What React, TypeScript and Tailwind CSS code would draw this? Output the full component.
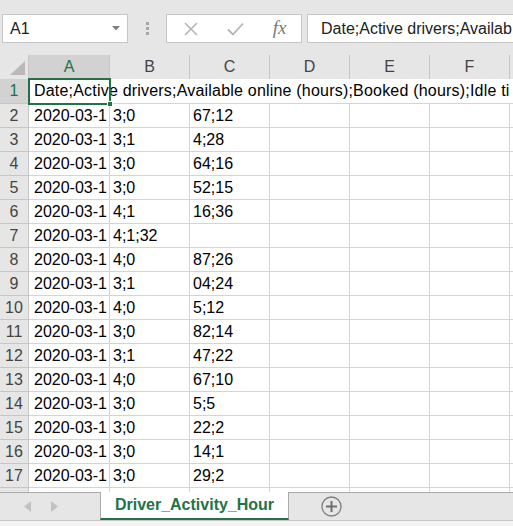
import React from 'react';

const font = { fontFamily: '"Liberation Sans", Arial, sans-serif' };

const data: [string, string][] = [
  ['3;0', '67;12'],
  ['3;1', '4;28'],
  ['3;0', '64;16'],
  ['3;0', '52;15'],
  ['4;1', '16;36'],
  ['4;1;32', ''],
  ['4;0', '87;26'],
  ['3;1', '04;24'],
  ['4;0', '5;12'],
  ['3;0', '82;14'],
  ['3;1', '47;22'],
  ['4;0', '67;10'],
  ['3;0', '5;5'],
  ['3;0', '22;2'],
  ['3;0', '14;1'],
  ['3;0', '29;2'],
];

const cols = ['A', 'B', 'C', 'D', 'E', 'F', 'G'];
const colWidths = ['w-[81px]', 'w-[80px]', 'w-[80px]', 'w-[80px]', 'w-[80px]', 'w-[80px]', 'w-[80px]'];

function TopBar() {
  return (
    <div className="flex h-[55px] shrink-0 items-start overflow-hidden bg-[#e6e6e6] pt-[14px]">
      <div className="ml-[2px] flex h-[29px] w-[126px] shrink-0 items-center justify-between border border-[#c6c6c6] bg-white pl-[7px] pr-[7px] text-[16px] text-[#222]">
        <span>A1</span>
        <svg width="8" height="5" viewBox="0 0 8 5">
          <path d="M0 0 L8 0 L4 4.5 Z" fill="#808080" />
        </svg>
      </div>
      <div className="flex h-[29px] w-[38px] shrink-0 flex-col items-center justify-center gap-[2px]">
        <span className="h-[3px] w-[3px] bg-[#a6a6a6]" />
        <span className="h-[3px] w-[3px] bg-[#a6a6a6]" />
        <span className="h-[3px] w-[3px] bg-[#a6a6a6]" />
      </div>
      <div className="flex h-[29px] w-[136px] shrink-0 items-center border border-[#c6c6c6] bg-white">
        <div className="flex w-[45px] justify-center pl-[3px]">
          <svg width="14" height="14" viewBox="0 0 14 14">
            <path d="M1 1 L13 13 M13 1 L1 13" stroke="#b4b4b4" strokeWidth="1.6" />
          </svg>
        </div>
        <div className="flex w-[46px] justify-center">
          <svg width="17" height="14" viewBox="0 0 17 14">
            <path d="M1 7.5 L6 12.5 L16 1.5" stroke="#b4b4b4" strokeWidth="1.8" fill="none" />
          </svg>
        </div>
        <div
          className="flex w-[43px] justify-center text-[19px] italic text-[#7a7a7a]"
          style={{ fontFamily: '"Liberation Serif", "Times New Roman", serif' }}
        >
          fx
        </div>
      </div>
      <div className="ml-[5px] flex h-[29px] w-[230px] shrink-0 items-center whitespace-nowrap border border-[#c6c6c6] bg-white pl-[13px] text-[16px] text-[#222]">
        Date;Active drivers;Availab
      </div>
    </div>
  );
}

function ColumnHeader() {
  return (
    <div className="flex h-[24px] shrink-0 bg-[#e6e6e6]">
      <div className="flex w-[29px] shrink-0 items-end justify-end border-r border-[#c6c6c6] pb-[4px] pr-[3px]">
        <svg width="15" height="14" viewBox="0 0 15 14">
          <path d="M15 0 L15 14 L0 14 Z" fill="#b9b9b9" />
        </svg>
      </div>
      {cols.map((c, i) => (
        <div
          key={c}
          className={`${colWidths[i]} flex shrink-0 items-center justify-center border-r border-[#c6c6c6] text-[16px] ${
            i === 0 ? 'bg-[#d2d2d2] text-[#217346]' : 'text-[#444]'
          }`}
        >
          {i < 6 ? c : ''}
        </div>
      ))}
    </div>
  );
}

function RowHeader({ n, selected }: { n: number; selected?: boolean }) {
  return (
    <div
      className={`flex w-[29px] shrink-0 items-center justify-center border-b border-r border-[#c6c6c6] text-[16px] ${
        selected ? 'bg-[#d2d2d2] text-[#217346]' : 'bg-[#e6e6e6] text-[#444]'
      }`}
    >
      {n}
    </div>
  );
}

function Cell({ i, children }: { i: number; children?: React.ReactNode }) {
  return (
    <div
      className={`${colWidths[i]} flex shrink-0 items-center overflow-hidden whitespace-nowrap border-b border-r border-[#d4d4d4] ${
        i === 0 ? 'pl-[5px]' : 'pl-[3px]'
      } text-[16px] text-black`}
    >
      {children}
    </div>
  );
}

function Sheet() {
  return (
    <div className="relative flex h-[437px] shrink-0 flex-col overflow-hidden bg-white">
      <ColumnHeader />
      <div className="flex h-[25px] shrink-0">
        <RowHeader n={1} selected />
        <div className="flex flex-1 items-center overflow-hidden whitespace-nowrap border-b border-[#d4d4d4] pl-[5px] text-[16px] tracking-[0.2px] text-black">
          Date;Active drivers;Available online (hours);Booked (hours);Idle ti
        </div>
      </div>
      {data.map(([b, c], r) => (
        <div key={r} className="flex h-[24px] shrink-0">
          <RowHeader n={r + 2} />
          <Cell i={0}>2020-03-1</Cell>
          <Cell i={1}>{b}</Cell>
          <Cell i={2}>{c}</Cell>
          <Cell i={3} />
          <Cell i={4} />
          <Cell i={5} />
          <Cell i={6} />
        </div>
      ))}
      <div className="flex h-[24px] shrink-0">
        <div className="w-[29px] shrink-0 border-r border-[#c6c6c6] bg-[#e6e6e6]" />
        {cols.map((c, i) => (
          <Cell key={c} i={i} />
        ))}
      </div>
      {/* A1 selection */}
      <div className="pointer-events-none absolute left-[28px] top-[23px] h-[27px] w-[83px] border-2 border-[#217346]">
        <span className="absolute -bottom-[4px] -right-[4px] h-[6px] w-[6px] border border-white bg-[#217346]" />
      </div>
    </div>
  );
}

function TabBar() {
  return (
    <div className="flex h-[28px] shrink-0 bg-[#e6e6e6]">
      <div className="flex w-[100px] shrink-0 items-center gap-[20px] border-t border-[#ababab] pl-[24px]">
        <svg width="7" height="11" viewBox="0 0 7 11">
          <path d="M7 0 L7 11 L0 5.5 Z" fill="#c2c2c2" />
        </svg>
        <svg width="7" height="11" viewBox="0 0 7 11">
          <path d="M0 0 L0 11 L7 5.5 Z" fill="#c2c2c2" />
        </svg>
      </div>
      <div className="flex w-[189px] shrink-0 items-center justify-center border-x border-b-2 border-[#ababab] border-b-[#217346] bg-white pb-[1px] text-[16px] font-bold text-[#217346]">
        Driver_Activity_Hour
      </div>
      <div className="flex flex-1 items-center border-t border-[#ababab] pl-[32px]">
        <svg width="21" height="21" viewBox="0 0 21 21">
          <circle cx="10.5" cy="10.5" r="9.5" stroke="#808080" strokeWidth="1.3" fill="none" />
          <path d="M10.5 5 L10.5 16 M5 10.5 L16 10.5" stroke="#6e6e6e" strokeWidth="2" />
        </svg>
      </div>
    </div>
  );
}

export default function App() {
  return (
    <div className="flex h-[526px] w-[513px] flex-col overflow-hidden bg-[#f3f3f3]" style={font}>
      <TopBar />
      <Sheet />
      <TabBar />
      <div className="flex-1 border-t border-[#c6c6c6] bg-[#f3f3f3]" />
    </div>
  );
}
